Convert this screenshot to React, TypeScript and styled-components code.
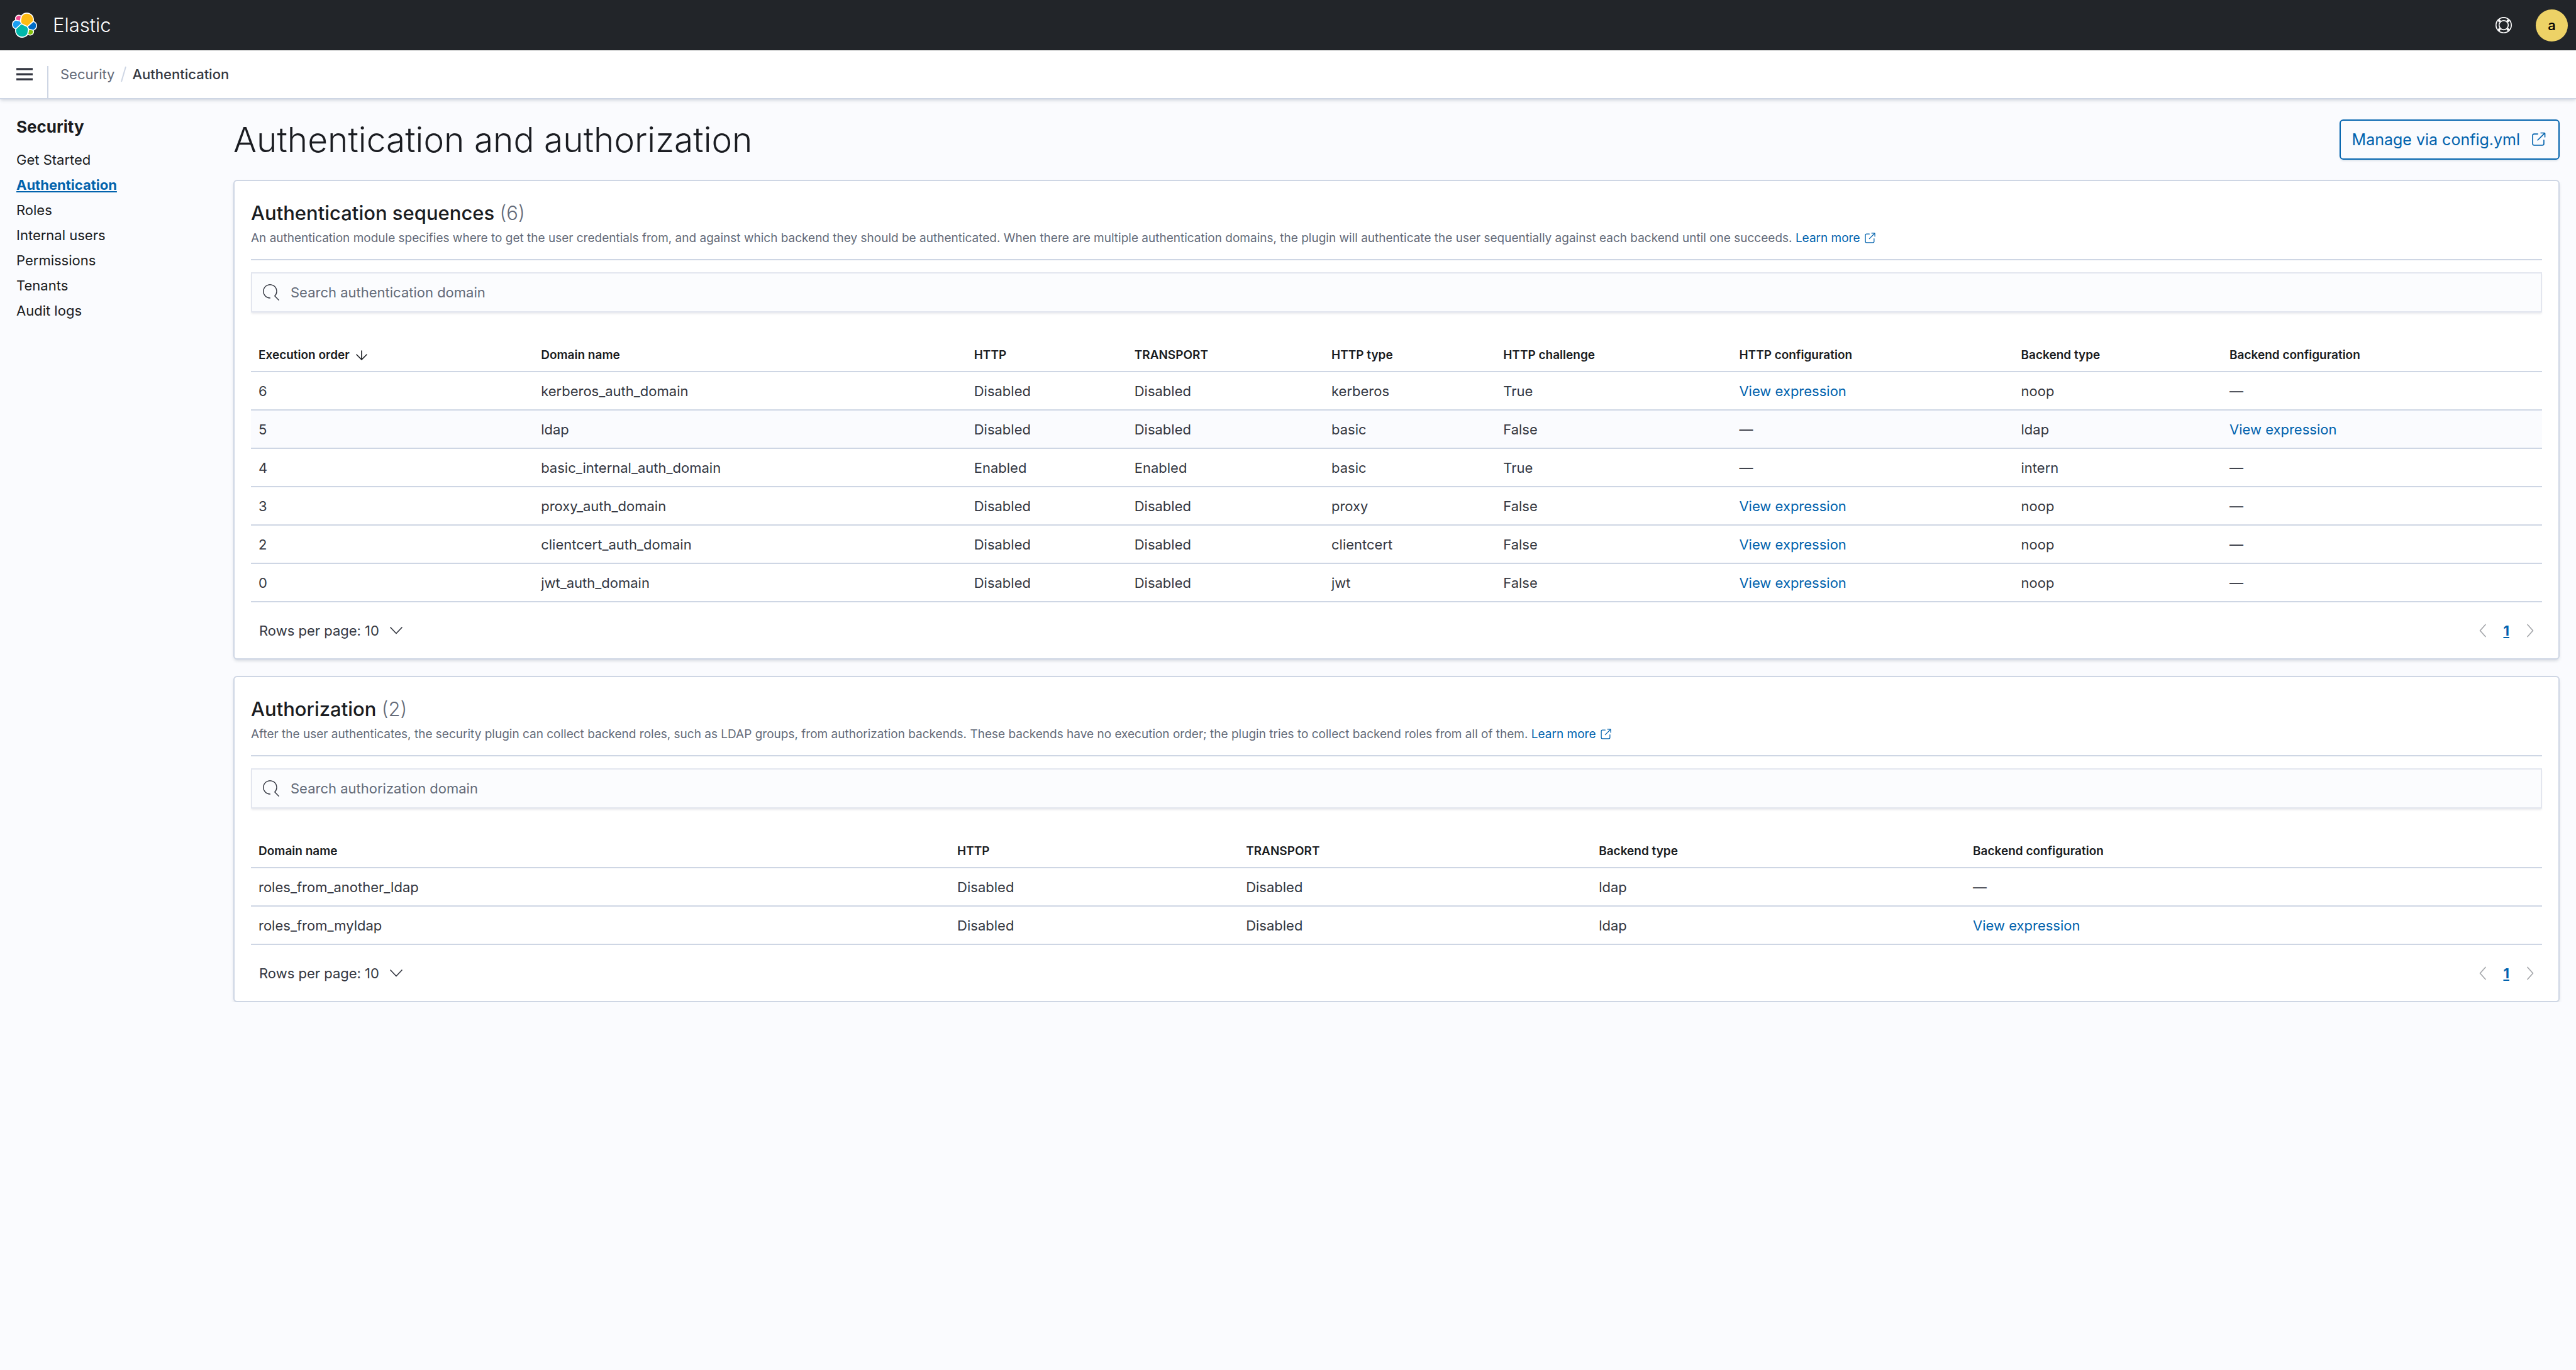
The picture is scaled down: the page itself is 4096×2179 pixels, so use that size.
import React from "react";
import styled, { createGlobalStyle } from "styled-components";

const color = {
  ink: "#1a1c21",
  text: "#343741",
  muted: "#646b79",
  link: "#0062ad",
  line: "#ced6e4",
  page: "#fafbfe",
};

const GlobalStyle = createGlobalStyle`
  *, *::before, *::after { box-sizing: border-box; }
  body {
    margin: 0;
    background: ${color.page};
    color: ${color.text};
    font-family: Inter, "Liberation Sans", sans-serif;
    font-size: 22px;
    line-height: 32px;
  }
  button, input { font: inherit; color: inherit; }
  button { cursor: pointer; background: none; border: 0; padding: 0; }
  a { color: ${color.link}; text-decoration: none; }
  h1, h2, p, ul, ol { margin: 0; padding: 0; }
  ul, ol { list-style: none; }
`;

const TopBar = styled.header`
  display: flex;
  align-items: center;
  justify-content: space-between;
  height: 80px;
  padding: 0 13px 0 19px;
  background: #222529;
`;

const Brand = styled.a`
  display: flex;
  align-items: center;
  gap: 25px;
  color: #fff;
  font-size: 31px;
  font-weight: 300;
  line-height: 40px;
`;

const TopActions = styled.div`
  display: flex;
  align-items: center;
  gap: 38px;
`;

const IconButton = styled.button`
  display: flex;
  align-items: center;
  justify-content: center;
  color: ${(p) => p.color ?? "inherit"};
`;

const Avatar = styled.button`
  width: 51px;
  height: 51px;
  border-radius: 50%;
  background: #edd266;
  color: #000;
  font-weight: 500;
`;

const NavBar = styled.nav`
  display: flex;
  height: 78px;
  background: #fff;
  border-bottom: 2px solid ${color.line};
  box-shadow: 0 3px 5px -1px rgba(65, 78, 101, 0.2);
`;

const MenuCell = styled.div`
  display: flex;
  width: 75px;
  padding-left: 26px;
`;

const Crumbs = styled.ol`
  display: flex;
  align-items: center;
  align-self: flex-end;
  height: 51px;
  padding: 0 0 26px 19px;
  border-left: 2px solid ${color.line};
`;

const Crumb = styled.li<{ $current?: boolean }>`
  display: flex;
  align-items: center;
  font-weight: ${(p) => (p.$current ? 500 : 400)};
  a { color: ${color.muted}; }
`;

const Layout = styled.div`
  display: grid;
  grid-template-columns: 345px minmax(0, 1fr);
  padding: 0 26px;
`;

const SideNav = styled.nav`
  padding-top: 26px;
  color: ${color.ink};
`;

const SideTitle = styled.h2`
  padding-bottom: 14px;
  font-size: 26px;
  font-weight: 700;
  line-height: 36px;
`;

const SideLink = styled.a<{ $active?: boolean }>`
  display: block;
  width: max-content;
  line-height: 40px;
  color: ${(p) => (p.$active ? color.link : color.ink)};
  font-weight: ${(p) => (p.$active ? 700 : 400)};
  text-decoration: ${(p) => (p.$active ? "underline" : "none")};
`;

const Main = styled.main`
  display: flex;
  flex-direction: column;
  gap: 26px;
  padding-top: 32px;
`;

const PageHead = styled.div`
  display: flex;
  align-items: center;
  justify-content: space-between;
  height: 64px;
  margin-bottom: 6px;
`;

const PageTitle = styled.h1`
  color: ${color.ink};
  font-size: 55px;
  font-weight: 300;
  line-height: 64px;
`;

const OutlineButton = styled.button`
  display: flex;
  align-items: center;
  gap: 16px;
  height: 64px;
  padding: 0 19px 0 18px;
  border: 2px solid ${color.link};
  border-radius: 6px;
  color: ${color.link};
  font-size: 25px;
  box-shadow: 0 3px 3px -1px rgba(54, 97, 126, 0.15);
`;

const Panel = styled.section`
  padding: 27px 26px 0;
  background: #fff;
  border: 2px solid ${color.line};
  border-radius: 6px;
  box-shadow: 0 3px 5px -1px rgba(65, 78, 101, 0.2);
`;

const PanelTitle = styled.h2`
  color: ${color.ink};
  font-size: 31px;
  font-weight: 500;
  line-height: 48px;
`;

const Count = styled.span`
  color: ${color.muted};
  font-weight: 300;
`;

const Note = styled.p`
  padding-bottom: 17px;
  border-bottom: 2px solid ${color.line};
  color: ${color.muted};
  font-size: 19px;
  line-height: 32px;
`;

const NoteLink = styled.a`
  display: inline-flex;
  align-items: center;
  gap: 5px;
`;

const Search = styled.label`
  display: flex;
  align-items: center;
  gap: 18px;
  height: 64px;
  margin: 19px 0 30px;
  padding: 0 17px;
  background: #fbfcfe;
  border: 2px solid #e3e6ef;
  box-shadow: 0 3px 3px -1px rgba(65, 78, 101, 0.12);
`;

const SearchInput = styled.input`
  flex: 1;
  padding: 0;
  border: 0;
  outline: 0;
  background: none;
  &::placeholder { color: ${color.muted}; opacity: 1; }
`;

const Table = styled.table`
  width: 100%;
  border-collapse: separate;
  border-spacing: 0;
  table-layout: fixed;
  text-align: left;
`;

const Th = styled.th`
  height: 65px;
  padding: 12px 12px 0;
  border-bottom: 2px solid ${color.line};
  color: ${color.ink};
  font-size: 19px;
  font-weight: 600;
  line-height: 24px;
`;

const SortButton = styled.button`
  display: flex;
  align-items: center;
  gap: 10px;
`;

const Row = styled.tr<{ $hover?: boolean }>`
  background: ${(p) => (p.$hover ? color.page : "transparent")};
`;

const Td = styled.td`
  height: 61px;
  padding: 0 12px;
  border-bottom: 2px solid ${color.line};
`;

const LinkButton = styled.button`
  color: ${color.link};
`;

const PanelFoot = styled.div`
  display: flex;
  align-items: center;
  justify-content: space-between;
  height: 89px;
  padding: 0 6px 0 13px;
`;

const RowsButton = styled.button`
  display: flex;
  align-items: center;
  gap: 14px;
`;

const Pager = styled.nav`
  display: flex;
  align-items: center;
  gap: 20px;
`;

const PageNumber = styled.button`
  color: ${color.link};
  font-weight: 700;
  text-decoration: underline;
`;

const Logo = () => (
  <svg width="40" height="40" viewBox="0 0 32 32" aria-hidden="true">
    <path fill="#fff" d="M32 16.77c0-2.677-1.663-5.012-4.161-5.928.112-.576.164-1.152.164-1.77C28.003 4.068 23.95 0 18.963 0c-2.918 0-5.63 1.405-7.33 3.775a4.732 4.732 0 0 0-2.935-.995c-2.643 0-4.788 2.147-4.788 4.79 0 .584.104 1.15.31 1.683A6.297 6.297 0 0 0 0 15.243c0 2.695 1.664 5.029 4.179 5.945a8.9 8.9 0 0 0-.172 1.767c0 5.003 4.05 9.061 9.046 9.061 2.935 0 5.647-1.41 7.346-3.793a4.7 4.7 0 0 0 2.92 1.013c2.643 0 4.787-2.145 4.787-4.79 0-.583-.103-1.149-.309-1.682C30.3 21.834 32 19.45 32 16.77" />
    <path fill="#fdbb14" d="m12.58 13.787 7.002 3.211 7.066-6.213a7.849 7.849 0 0 0 .152-1.557c0-4.287-3.464-7.77-7.721-7.77a7.68 7.68 0 0 0-6.363 3.39l-1.176 6.06 1.04 2.879Z" />
    <path fill="#00b7aa" d="M5.333 21.216a8.001 8.001 0 0 0-.152 1.58c0 4.303 3.483 7.804 7.763 7.804 2.573 0 4.967-1.277 6.415-3.418l1.165-6.053-1.555-2.965-7.03-3.195-6.606 6.247Z" />
    <path fill="#f04a91" d="m5.288 9.067 4.8 1.13L11.14 4.78a3.79 3.79 0 0 0-6.09 3.02c0 .435.08.862.238 1.267Z" />
    <path fill="#1b9ff2" d="M4.872 10.214c-2.13.704-3.627 2.75-3.627 4.995 0 2.186 1.357 4.139 3.39 4.913l6.73-6.078-1.236-2.635-5.257-1.195Z" />
    <path fill="#84c10c" d="M20.873 27.2a3.78 3.78 0 0 0 6.079-3.019c0-.431-.08-.86-.236-1.265l-4.797-1.119-1.046 5.403Z" />
    <path fill="#006bc6" d="m21.843 20.58 5.28 1.231c2.132-.704 3.63-2.75 3.63-4.997a5.263 5.263 0 0 0-3.396-4.906l-6.905 6.044 1.391 2.628Z" />
  </svg>
);

const HelpIcon = () => (
  <svg width="26" height="26" viewBox="0 0 16 16" fill="none" stroke="currentColor" aria-hidden="true">
    <circle cx="8" cy="8" r="7.5" />
    <circle cx="8" cy="8" r="4.5" />
    <path strokeWidth="2.4" d="M3 3l1.5 1.5M13 3l-1.5 1.5M3 13l1.5-1.5M13 13l-1.5-1.5" />
  </svg>
);

const MenuIcon = () => (
  <svg width="26" height="26" viewBox="0 0 16 16" fill="currentColor" aria-hidden="true">
    <path d="M0 2h16v2H0zM0 7h16v2H0zM0 12h16v2H0z" />
  </svg>
);

const SlashIcon = () => (
  <svg width="28" height="26" viewBox="0 0 28 26" fill="none" stroke={color.line} strokeWidth="2" aria-hidden="true">
    <path d="M18 1 11 25" />
  </svg>
);

const PopoutIcon = ({ size }: { size: number }) => (
  <svg width={size} height={size} viewBox="0 0 16 16" fill="currentColor" aria-hidden="true">
    <path d="M13 8.5a.5.5 0 1 1 1 0V12a2 2 0 0 1-2 2H4a2 2 0 0 1-2-2V4a2 2 0 0 1 2-2h3.5a.5.5 0 0 1 0 1H4a1 1 0 0 0-1 1v8a1 1 0 0 0 1 1h8a1 1 0 0 0 1-1V8.5Zm-5.12.339a.5.5 0 1 1-.706-.707L13.305 2H10.5a.5.5 0 1 1 0-1H14a1 1 0 0 1 1 1v3.5a.5.5 0 1 1-1 0V2.72L7.88 8.838Z" />
  </svg>
);

const SearchIcon = () => (
  <svg width="26" height="26" viewBox="0 0 16 16" fill="none" stroke="currentColor" strokeWidth="0.9" strokeLinecap="round" aria-hidden="true">
    <path d="M7 13.5A6.5 6.5 0 1 1 11.6 11.6L15.5 15.5" />
  </svg>
);

const SortIcon = () => (
  <svg width="18" height="16" viewBox="0 0 18 16" fill="none" stroke="currentColor" strokeWidth="1.6" strokeLinecap="round" aria-hidden="true">
    <path d="M9 1v14M1 7l8 8 8-8" />
  </svg>
);

const paths = {
  down: "m4 8 9 9.500L22 8",
  left: "M17 3.500 8.500 13l8.500 9.500",
  right: "m9 3.500 8.500 9.500L9 22.500",
};

const Chevron = ({ to }: { to: keyof typeof paths }) => (
  <svg width="26" height="26" viewBox="0 0 26 26" fill="none" stroke="currentColor" strokeWidth="1.7" strokeLinecap="round" strokeLinejoin="round" aria-hidden="true">
    <path d={paths[to]} />
  </svg>
);

const VIEW = "View expression";

const authentication = {
  title: "Authentication sequences",
  note: "An authentication module specifies where to get the user credentials from, and against which backend they should be authenticated. When there are multiple authentication domains, the plugin will authenticate the user sequentially against each backend until one succeeds.",
  placeholder: "Search authentication domain",
  sorted: "Execution order",
  columns: [
    ["Execution order", 12.33],
    ["Domain name", 18.9],
    ["HTTP", 7],
    ["TRANSPORT", 8.6],
    ["HTTP type", 7.5],
    ["HTTP challenge", 10.3],
    ["HTTP configuration", 12.3],
    ["Backend type", 9.1],
    ["Backend configuration", 13.97],
  ] as [string, number][],
  rows: [
    ["6", "kerberos_auth_domain", "Disabled", "Disabled", "kerberos", "True", VIEW, "noop", "—"],
    ["5", "ldap", "Disabled", "Disabled", "basic", "False", "—", "ldap", VIEW],
    ["4", "basic_internal_auth_domain", "Enabled", "Enabled", "basic", "True", "—", "intern", "—"],
    ["3", "proxy_auth_domain", "Disabled", "Disabled", "proxy", "False", VIEW, "noop", "—"],
    ["2", "clientcert_auth_domain", "Disabled", "Disabled", "clientcert", "False", VIEW, "noop", "—"],
    ["0", "jwt_auth_domain", "Disabled", "Disabled", "jwt", "False", VIEW, "noop", "—"],
  ],
  hovered: 1,
};

const authorization = {
  title: "Authorization",
  note: "After the user authenticates, the security plugin can collect backend roles, such as LDAP groups, from authorization backends. These backends have no execution order; the plugin tries to collect backend roles from all of them.",
  placeholder: "Search authorization domain",
  sorted: "",
  columns: [
    ["Domain name", 30.5],
    ["HTTP", 12.6],
    ["TRANSPORT", 15.4],
    ["Backend type", 16.33],
    ["Backend configuration", 25.17],
  ] as [string, number][],
  rows: [
    ["roles_from_another_ldap", "Disabled", "Disabled", "ldap", "—"],
    ["roles_from_myldap", "Disabled", "Disabled", "ldap", VIEW],
  ],
  hovered: -1,
};

const DomainPanel = ({ data }: { data: typeof authentication }) => (
  <Panel>
    <PanelTitle>
      {data.title} <Count>({data.rows.length})</Count>
    </PanelTitle>
    <Note>
      {data.note}{" "}
      <NoteLink href="#docs">
        Learn more <PopoutIcon size={20} />
      </NoteLink>
    </Note>
    <Search>
      <SearchIcon />
      <SearchInput type="search" placeholder={data.placeholder} aria-label={data.placeholder} />
    </Search>
    <Table>
      <colgroup>
        {data.columns.map(([name, share]) => (
          <col key={name} style={{ width: `${share}%` }} />
        ))}
      </colgroup>
      <thead>
        <tr>
          {data.columns.map(([name]) => (
            <Th key={name} scope="col">
              {name === data.sorted ? (
                <SortButton>
                  {name} <SortIcon />
                </SortButton>
              ) : (
                name
              )}
            </Th>
          ))}
        </tr>
      </thead>
      <tbody>
        {data.rows.map((cells, r) => (
          <Row key={r} $hover={r === data.hovered}>
            {cells.map((cell, c) => (
              <Td key={c}>{cell === VIEW ? <LinkButton>{cell}</LinkButton> : cell}</Td>
            ))}
          </Row>
        ))}
      </tbody>
    </Table>
    <PanelFoot>
      <RowsButton>
        Rows per page: 10 <Chevron to="down" />
      </RowsButton>
      <Pager aria-label="Pagination">
        <IconButton color="#a5a7ab" aria-label="Previous page">
          <Chevron to="left" />
        </IconButton>
        <PageNumber aria-current="page">1</PageNumber>
        <IconButton color="#a5a7ab" aria-label="Next page">
          <Chevron to="right" />
        </IconButton>
      </Pager>
    </PanelFoot>
  </Panel>
);

const sections = ["Get Started", "Authentication", "Roles", "Internal users", "Permissions", "Tenants", "Audit logs"];

export default function App() {
  return (
    <>
      <GlobalStyle />
      <TopBar>
        <Brand href="#home">
          <Logo />
          Elastic
        </Brand>
        <TopActions>
          <IconButton color="#fff" aria-label="Help">
            <HelpIcon />
          </IconButton>
          <Avatar aria-label="Account">a</Avatar>
        </TopActions>
      </TopBar>
      <NavBar aria-label="Breadcrumbs">
        <MenuCell>
          <IconButton aria-label="Toggle navigation">
            <MenuIcon />
          </IconButton>
        </MenuCell>
        <Crumbs>
          <Crumb>
            <a href="#security">Security</a>
            <SlashIcon />
          </Crumb>
          <Crumb $current aria-current="page">
            Authentication
          </Crumb>
        </Crumbs>
      </NavBar>
      <Layout>
        <SideNav aria-label="Security">
          <SideTitle>Security</SideTitle>
          <ul>
            {sections.map((name) => (
              <li key={name}>
                <SideLink href="#section" $active={name === "Authentication"}>
                  {name}
                </SideLink>
              </li>
            ))}
          </ul>
        </SideNav>
        <Main>
          <PageHead>
            <PageTitle>Authentication and authorization</PageTitle>
            <OutlineButton>
              Manage via config.yml <PopoutIcon size={26} />
            </OutlineButton>
          </PageHead>
          <DomainPanel data={authentication} />
          <DomainPanel data={authorization} />
        </Main>
      </Layout>
    </>
  );
}
